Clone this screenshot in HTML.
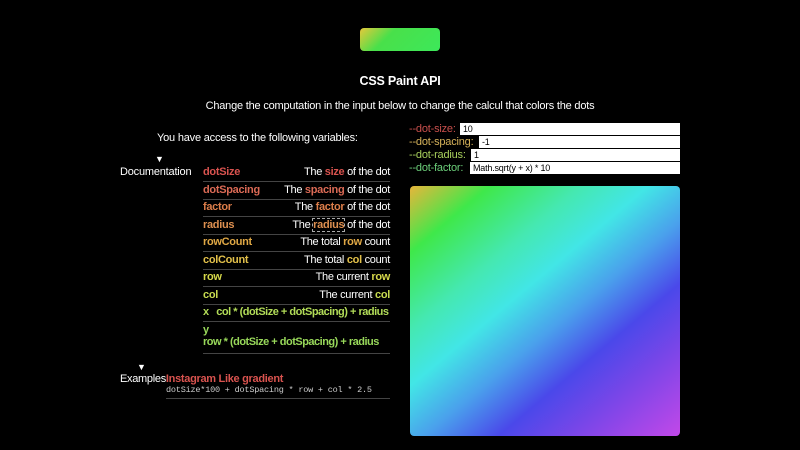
<!DOCTYPE html>
<html><head><style>
body{margin:0;width:800px;height:450px;background:#000;color:#fff;font-family:"Liberation Sans",sans-serif;overflow:hidden;position:relative;letter-spacing:-0.2px}
.a{position:absolute;white-space:nowrap}
.banner{left:360px;top:28px;width:80px;height:23px;background:linear-gradient(135deg,#e6c83a 0%,#49e04a 35%,#3de85a 100%);border-radius:4px}
h1{position:absolute;left:0;width:800px;top:74px;margin:0;text-align:center;font-size:12.5px;font-weight:bold}
.sub{left:0;width:800px;text-align:center;top:100px;font-size:11px}
.row{position:absolute;left:203px;width:187px;height:17px;border-bottom:1px solid #444;font-size:11px;line-height:17px;white-space:nowrap;letter-spacing:-0.3px}
.row b{font-weight:bold}
.row .r{position:absolute;right:0;top:0}
.inp{position:absolute;background:#fff;color:#000;font-size:9px;line-height:12px;height:12px;padding-left:3px;box-sizing:border-box}
.lbl{position:absolute;font-size:11px;line-height:12px;white-space:nowrap}
.canvas{left:410px;top:186px;width:270px;height:250px;border-radius:4px;background:linear-gradient(140deg,#e8b53a 0%,#3fe84a 14%,#45e8b0 30%,#42e6e6 42%,#4aa0ec 55%,#4a48ea 68%,#7e46e8 82%,#c248e8 100%)}
</style></head><body>
<div class="a banner"></div>
<h1>CSS Paint API</h1>
<div class="a sub">Change the computation in the input below to change the calcul that colors the dots</div>
<div class="a" style="left:157px;top:132px;font-size:11px">You have access to the following variables:</div>
<div class="a" style="left:155px;top:154px;font-size:9px">▼</div>
<div class="a" style="left:120px;top:166px;font-size:11px">Documentation</div>
<div class="row" style="top:164px"><b style="color:#d9534f">dotSize</b><span class="r">The <b style="color:#d9534f">size</b> of the dot</span></div>
<div class="row" style="top:182px"><b style="color:#db6a55">dotSpacing</b><span class="r">The <b style="color:#db6a55">spacing</b> of the dot</span></div>
<div class="row" style="top:199px"><b style="color:#dd7e4a">factor</b><span class="r">The <b style="color:#dd7e4a">factor</b> of the dot</span></div>
<div class="row" style="top:217px"><b style="color:#de9050">radius</b><span class="r">The <b style="color:#de9050;outline:1px dashed #aaa">radius</b> of the dot</span></div>
<div class="row" style="top:234px"><b style="color:#e0a845">rowCount</b><span class="r">The total <b style="color:#e0a845">row</b> count</span></div>
<div class="row" style="top:252px"><b style="color:#e2c04a">colCount</b><span class="r">The total <b style="color:#e2c04a">col</b> count</span></div>
<div class="row" style="top:269px"><b style="color:#d6d84a">row</b><span class="r">The current <b style="color:#d6d84a">row</b></span></div>
<div class="row" style="top:287px"><b style="color:#c8dc50">col</b><span class="r">The current <b style="color:#c8dc50">col</b></span></div>
<div class="row" style="top:304px;color:#b2dc58;font-size:11px;letter-spacing:-0.5px"><b>x &nbsp; col * (dotSize + dotSpacing) + radius</b></div>
<div class="row" style="top:322px;height:29px;line-height:12px;padding-top:2px;color:#98d85a;font-size:11px;letter-spacing:-0.5px"><b>y<br>row * (dotSize + dotSpacing) + radius</b></div>
<div class="a" style="left:137px;top:362px;font-size:9px">▼</div>
<div class="a" style="left:120px;top:373px;font-size:11px;letter-spacing:-0.3px">Examples<b style="color:#d9534f">Instagram Like gradient</b></div>
<div class="a" style="left:166px;top:385px;width:224px;height:13px;border-bottom:1px solid #444;font-family:'Liberation Mono',monospace;font-size:8.5px;letter-spacing:-0.2px;color:#ccc">dotSize*100 + dotSpacing * row + col * 2.5</div>
<div class="lbl" style="left:409px;top:123px;color:#c9504d">--dot-size:</div>
<div class="inp" style="left:460px;top:123px;width:220px">10</div>
<div class="lbl" style="left:409px;top:136px;color:#d6b25a">--dot-spacing:</div>
<div class="inp" style="left:479px;top:136px;width:201px">-1</div>
<div class="lbl" style="left:409px;top:149px;color:#a8d05c">--dot-radius:</div>
<div class="inp" style="left:471px;top:149px;width:209px">1</div>
<div class="lbl" style="left:409px;top:162px;color:#6ccf7a">--dot-factor:</div>
<div class="inp" style="left:470px;top:162px;width:210px">Math.sqrt(y + x) * 10</div>
<div class="a canvas"></div>
</body></html>
